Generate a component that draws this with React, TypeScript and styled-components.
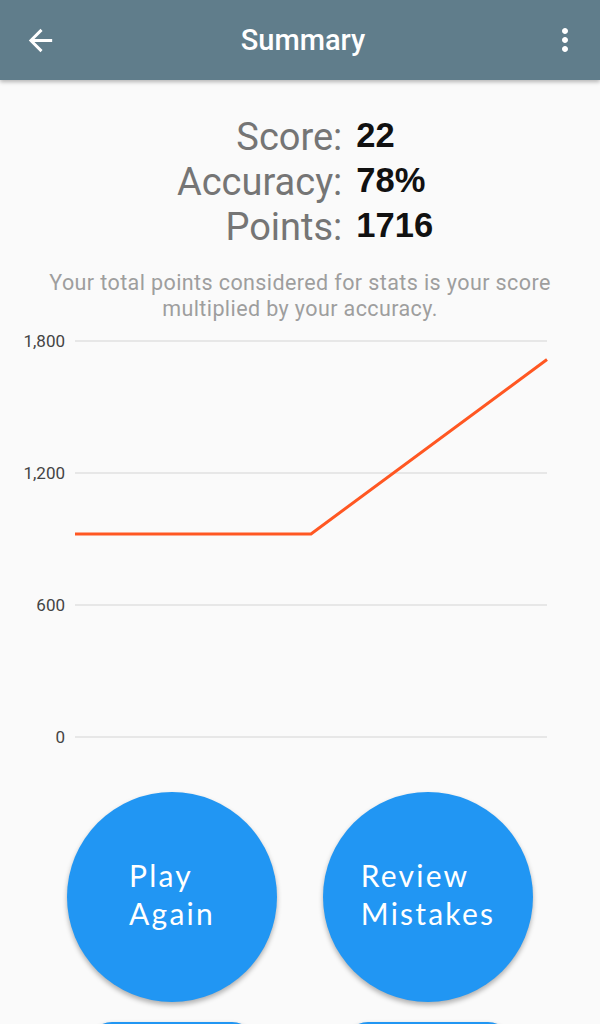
import React from 'react';
import styled, { createGlobalStyle } from 'styled-components';

const GlobalStyle = createGlobalStyle`
    body {
        margin: 0;
        background: #fafafa;
        font-family: Roboto, 'Liberation Sans', sans-serif;
    }
`;

const Page = styled.div`
    width: 600px;
    height: 1024px;
    overflow: hidden;
    background: #fafafa;
`;

const AppBar = styled.header`
    height: 80px;
    background: #607d8b;
    display: grid;
    grid-template-columns: 1fr auto 1fr;
    align-items: center;
    padding: 0 17px 0 23px;
    box-shadow: 0 2px 4px rgba(0, 0, 0, 0.28);
    position: relative;
    z-index: 1;
`;

const IconButton = styled.button<{ $end?: boolean }>`
    justify-self: ${props => (props.$end ? 'end' : 'start')};
    padding: 0;
    border: none;
    background: none;
    display: flex;
    align-items: center;
    justify-content: center;
    color: #fff;
`;

const Title = styled.h1`
    margin: 0;
    font-size: 29px;
    font-weight: 500;
    color: #fff;
`;

const Stats = styled.dl`
    display: grid;
    grid-template-columns: auto auto;
    justify-content: center;
    column-gap: 14px;
    margin: 34.5px 0 0;
    padding-left: 10px;
    line-height: 45px;
`;

const StatLabel = styled.dt`
    text-align: right;
    font-size: 38px;
    color: #757575;
`;

const StatValue = styled.dd`
    margin: -2px 0 0;
    font-family: 'Liberation Sans', Arial, sans-serif;
    font-weight: 700;
    font-size: 34.5px;
    color: #111;
`;

const Note = styled.p`
    margin: 20.5px 0 0;
    text-align: center;
    font-size: 21.5px;
    letter-spacing: 0.4px;
    line-height: 26px;
    color: #9e9e9e;
`;

const Chart = styled.svg`
    display: block;
    width: 600px;
    height: 430px;
`;

const ButtonGrid = styled.div`
    display: grid;
    grid-template-columns: 210px 210px;
    justify-content: center;
    justify-items: center;
    column-gap: 46px;
    row-gap: 20px;
    margin-top: 40px;
`;

const RoundButton = styled.button`
    width: 210px;
    height: 210px;
    border-radius: 50%;
    border: none;
    background: #2196f3;
    color: #fff;
    font-family: Lato, 'Noto Sans', sans-serif;
    font-size: 30px;
    line-height: 38px;
    letter-spacing: 2.2px;
    box-shadow: 0 3px 5px rgba(0, 0, 0, 0.3);
    display: flex;
    align-items: center;
    justify-content: center;
    padding: 0 0 6px;
`;

const ButtonText = styled.span`
    text-align: left;
`;

const PillButton = styled.button`
    width: 170px;
    height: 60px;
    border-radius: 25px;
    border: none;
    background: #2196f3;
    box-shadow: 0 2px 4px rgba(0, 0, 0, 0.3);
`;

const gridValues = [1800, 1200, 600, 0];
const points = [923, 923, 1716];

function ScoreChart() {
    const top = 19;
    const bottom = 415;
    const left = 75;
    const right = 547;
    const y = (v: number) => bottom - (v / 1800) * (bottom - top);
    const step = (right - left) / (points.length - 1);
    const line = points.map((p, i) => `${left + i * step},${y(p)}`).join(' ');

    return (
        <Chart viewBox="0 0 600 430">
            {gridValues.map(v => (
                <g key={v}>
                    <line x1={left} x2={right} y1={y(v)} y2={y(v)} stroke="#e0e0e0" strokeWidth="1.5" />
                    <text
                        x="65"
                        y={y(v) + 6}
                        textAnchor="end"
                        fontSize="17"
                        fill="#444"
                        fontFamily="Roboto, sans-serif"
                    >
                        {v.toLocaleString('en-US')}
                    </text>
                </g>
            ))}
            <polyline points={line} fill="none" stroke="#ff5722" strokeWidth="3" />
        </Chart>
    );
}

export default function App() {
    return (
        <Page>
            <GlobalStyle />
            <AppBar>
                <IconButton aria-label="Back">
                    <svg width="35" height="35" viewBox="0 0 24 24" fill="currentColor">
                        <path d="M20 11H7.83l5.59-5.59L12 4l-8 8 8 8 1.41-1.41L7.83 13H20v-2z" />
                    </svg>
                </IconButton>
                <Title>Summary</Title>
                <IconButton $end aria-label="More">
                    <svg width="36" height="36" viewBox="0 0 24 24" fill="currentColor">
                        <path d="M12 8c1.1 0 2-.9 2-2s-.9-2-2-2-2 .9-2 2 .9 2 2 2zm0 2c-1.1 0-2 .9-2 2s.9 2 2 2 2-.9 2-2-.9-2-2-2zm0 6c-1.1 0-2 .9-2 2s.9 2 2 2 2-.9 2-2-.9-2-2-2z" />
                    </svg>
                </IconButton>
            </AppBar>

            <Stats>
                <StatLabel>Score:</StatLabel>
                <StatValue>22</StatValue>
                <StatLabel>Accuracy:</StatLabel>
                <StatValue>78%</StatValue>
                <StatLabel>Points:</StatLabel>
                <StatValue>1716</StatValue>
            </Stats>

            <Note>
                Your total points considered for stats is your score
                <br />
                multiplied by your accuracy.
            </Note>

            <ScoreChart />

            <ButtonGrid>
                <RoundButton>
                    <ButtonText>
                        Play
                        <br />
                        Again
                    </ButtonText>
                </RoundButton>
                <RoundButton>
                    <ButtonText>
                        Review
                        <br />
                        Mistakes
                    </ButtonText>
                </RoundButton>
                <PillButton aria-label="More options" />
                <PillButton aria-label="Settings" />
            </ButtonGrid>
        </Page>
    );
}
